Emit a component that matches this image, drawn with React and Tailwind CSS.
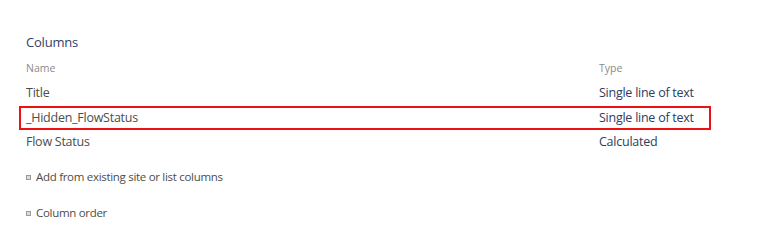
export default function App() {
  const rows = [
    { name: "Title", type: "Single line of text" },
    { name: "_Hidden_FlowStatus", type: "Single line of text", hl: true },
    { name: "Flow Status", type: "Calculated" },
  ];
  return (
    <div
      className="w-[768px] h-[231px] bg-white overflow-hidden pl-[26px] pt-[33px]"
      style={{ fontFamily: '"Open Sans", "Noto Sans", sans-serif' }}
    >
      <div className="text-[13px] leading-[18px] text-[#34406a] tracking-[-0.2px]">Columns</div>
      <div className="grid grid-cols-[573px_1fr] mt-[10px] text-[10.5px] leading-[14px] text-[#8a8a8a]">
        <div>Name</div>
        <div>Type</div>
      </div>
      <div className="mt-[6px] w-[685px]">
        {rows.map((r) =>
          r.hl ? (
            <div
              key={r.name}
              className="grid grid-cols-[573px_1fr] items-center h-[24px] -ml-[7px] pl-[5px] w-[692px] border-2 border-[#ee1111] text-[12.5px] tracking-[-0.25px]"
            >
              <div className="text-[#4d4d47]">{r.name}</div>
              <div className="text-[#2f3b63]">{r.type}</div>
            </div>
          ) : (
            <div
              key={r.name}
              className="grid grid-cols-[573px_1fr] items-center h-[25px] text-[12.5px] tracking-[-0.25px]"
            >
              <div className="text-[#4d4d47]">{r.name}</div>
              <div className="text-[#2f3b63]">{r.type}</div>
            </div>
          )
        )}
      </div>
      <div className="flex items-center gap-[5px] mt-[14px] text-[11.5px] leading-[16px] text-[#4d4d47] tracking-[-0.3px]">
        <span className="w-[5px] h-[5px] border border-[#9a9a9a] bg-[#dcdcdc]" />
        <span>Add from existing site or list columns</span>
      </div>
      <div className="flex items-center gap-[5px] mt-[20px] text-[11.5px] leading-[16px] text-[#4d4d47] tracking-[-0.3px]">
        <span className="w-[5px] h-[5px] border border-[#9a9a9a] bg-[#dcdcdc]" />
        <span>Column order</span>
      </div>
    </div>
  );
}
